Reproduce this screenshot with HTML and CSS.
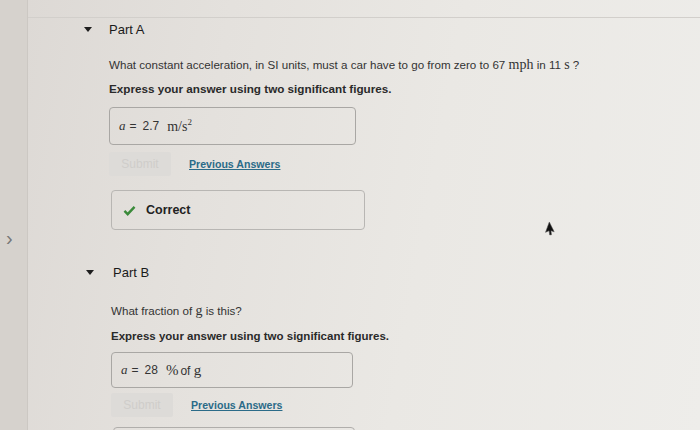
FILE: index.html
```html
<!DOCTYPE html>
<html>
<head>
<meta charset="utf-8">
<link rel="stylesheet" href="styles.css">
</head>
<body>
<div class="screen">
  <aside class="side"><span class="chev">&#x203A;</span></aside>
  <main class="main">
    <section class="part part-a">
      <div class="part-head"><span class="tri"></span><span class="part-title">Part A</span></div>
      <p class="question">What constant acceleration, in SI units, must a car have to go from zero to 67 <span class="m">mph</span> in 11 <span class="m">s</span> ?</p>
      <p class="express">Express your answer using two significant figures.</p>
      <div class="answer"><span class="var">a</span><span class="eq">=</span><span class="val">2.7</span><span class="m unit">m/s<sup>2</sup></span></div>
      <div class="actions"><span class="submit">Submit</span><span class="prev">Previous Answers</span></div>
      <div class="correct"><svg class="check" viewBox="0 0 14 12" width="13" height="11"><path d="M1.5 6.5 L5 10 L12.5 2" fill="none" stroke="#3a8a3a" stroke-width="2.6"/></svg><span>Correct</span></div>
    </section>
    <section class="part part-b">
      <div class="part-head"><span class="tri"></span><span class="part-title">Part B</span></div>
      <p class="question">What fraction of <span class="m">g</span> is this?</p>
      <p class="express">Express your answer using two significant figures.</p>
      <div class="answer"><span class="var">a</span><span class="eq">=</span><span class="val">28</span><span class="pct">%</span><span class="of">of <span class="m">g</span></span></div>
      <div class="actions"><span class="submit">Submit</span><span class="prev">Previous Answers</span></div>
      <div class="next-box"></div>
    </section>
  </main>
  <svg class="cursor" viewBox="0 0 10 14" width="10" height="14"><path d="M1 1 L1 12 L3.8 9.3 L5.8 13 L7.4 12.2 L5.5 8.6 L9 8.6 Z" fill="#111" stroke="#555" stroke-width="0.5"/></svg>
</div>
</body>
</html>
```
FILE: styles.css
```css
html, body {
  margin: 0;
  padding: 0;
}
body {
  width: 700px;
  height: 430px;
  overflow: hidden;
  font-family: "Liberation Sans", Arial, sans-serif;
  color: #2a2a2a;
}
.screen {
  position: relative;
  display: flex;
  width: 700px;
  height: 430px;
  overflow: hidden;
  background: linear-gradient(100deg, #dcd8d4 0%, #e4e1dd 30%, #eae8e4 60%, #eeedea 100%);
}
.side {
  width: 27px;
  flex: none;
  border-right: 1px solid #ccc8c3;
  background: #d6d2cd;
  position: relative;
}
.chev {
  position: absolute;
  left: 6px;
  top: 228px;
  font-size: 20px;
  color: #777;
  line-height: 1;
}
.main {
  flex: 1;
  border-top: 1px solid #d2cfcb;
  margin-top: 17px;
  overflow: hidden;
}
.part {
  display: flex;
  flex-direction: column;
  align-items: flex-start;
}
.part-a {
  padding-left: 56px;
  padding-top: 3px;
}
.part-b {
  padding-left: 58px;
  padding-top: 34px;
}
.part-head {
  display: flex;
  align-items: center;
  height: 16px;
}
.tri {
  width: 0;
  height: 0;
  border-left: 4px solid transparent;
  border-right: 4px solid transparent;
  border-top: 5px solid #1e1e1e;
  margin-right: 17px;
}
.part-b .tri {
  margin-right: 19px;
}
.part-title {
  font-size: 13px;
  color: #1a1a1a;
}
.question {
  margin: 20px 0 0 25px;
  font-size: 11.6px;
  color: #333;
  line-height: 16px;
}
.part-b .question {
  margin-top: 23px;
}
.m {
  font-family: "Liberation Serif", "DejaVu Serif", serif;
  font-size: 14px;
}
.express {
  margin: 8px 0 0 25px;
  font-size: 11.7px;
  font-weight: bold;
  color: #2a2a2a;
  line-height: 16px;
}
.part-b .express {
  margin-top: 9px;
  font-size: 11.5px;
}
.answer {
  margin: 10px 0 0 25px;
  width: 236px;
  height: 36px;
  border: 1px solid #a9a7a4;
  border-radius: 4px;
  display: flex;
  align-items: center;
  padding-left: 9px;
  font-size: 12px;
  color: #333;
}
.part-b .answer {
  width: 231px;
  height: 34px;
  margin-top: 8px;
}
.var {
  font-family: "Liberation Serif", "DejaVu Serif", serif;
  font-style: italic;
  font-size: 13px;
}
.eq {
  margin: 0 6px 0 4px;
}
.val {
  margin-right: 8px;
}
.unit sup {
  font-size: 9px;
}
.pct {
  font-family: "Liberation Serif", "DejaVu Serif", serif;
  font-size: 15px;
  margin-right: 2px;
}
.of .m {
  font-size: 15px;
}
.actions {
  margin: 7px 0 0 25px;
  display: flex;
  align-items: center;
}
.submit {
  width: 62px;
  height: 24px;
  background: #dddbd8;
  border-radius: 2px;
  color: #cfcdca;
  font-size: 12px;
  display: flex;
  align-items: center;
  justify-content: center;
}
.prev {
  margin-left: 18px;
  font-size: 10.6px;
  font-weight: bold;
  color: #2b6b88;
  text-decoration: underline;
}
.part-b .actions {
  margin-top: 5px;
}
.correct {
  margin: 14px 0 0 27px;
  width: 254px;
  height: 40px;
  border: 1px solid #b8b6b3;
  border-radius: 4px;
  display: flex;
  align-items: center;
  box-sizing: border-box;
  padding-left: 11px;
  font-size: 12.5px;
  font-weight: bold;
  color: #222;
}
.check {
  margin-right: 10px;
}
.next-box {
  margin: 10px 0 0 27px;
  width: 240px;
  height: 10px;
  border: 1px solid #b0aeab;
  border-radius: 4px;
}
.cursor {
  position: absolute;
  left: 546px;
  top: 222px;
  transform: rotate(20deg);
}
```
